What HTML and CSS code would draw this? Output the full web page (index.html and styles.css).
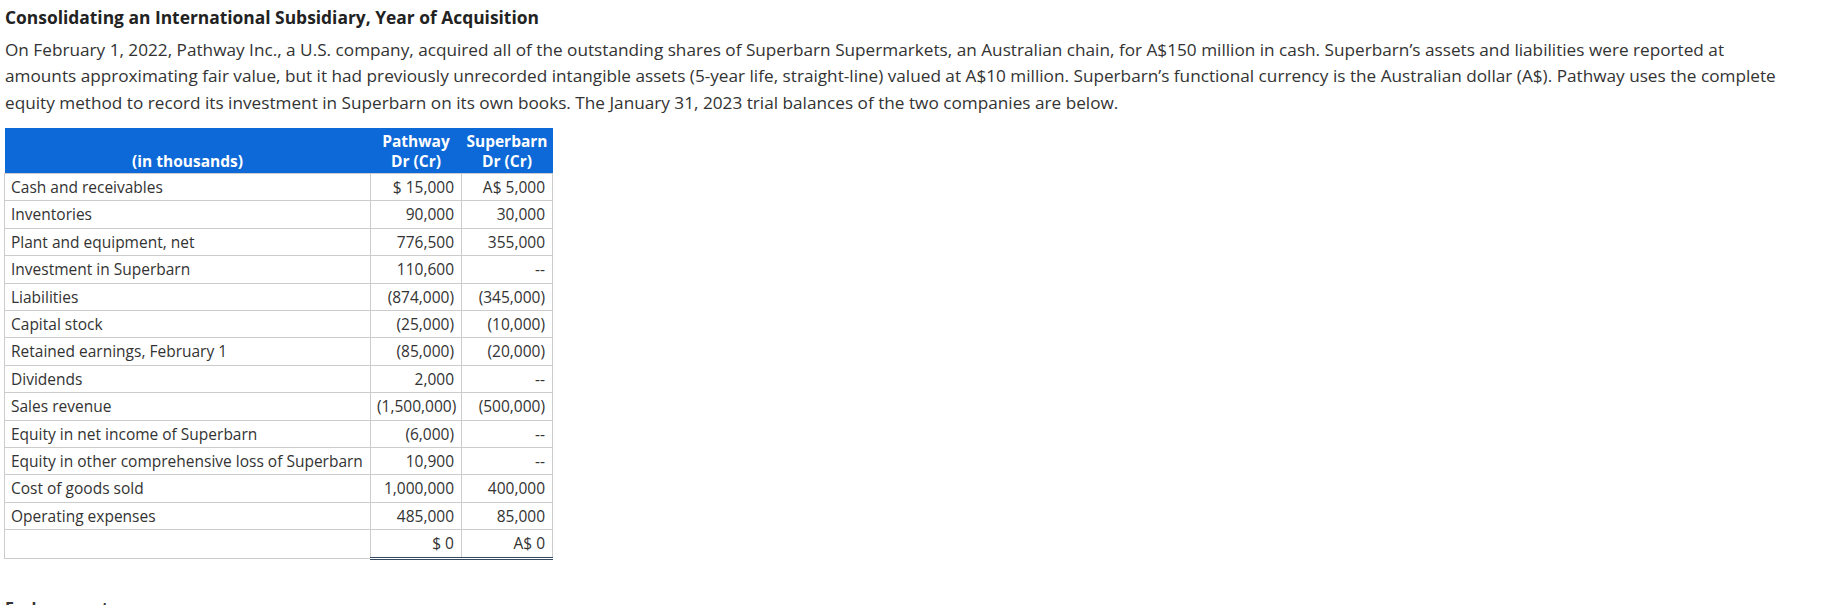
FILE: index.html
```html
<!DOCTYPE html>
<html lang="en">
<head>
<meta charset="utf-8">
<title>Consolidating an International Subsidiary</title>
<link rel="stylesheet" href="styles.css">
</head>
<body>
<div class="page">
  <h1 class="title">Consolidating an International Subsidiary, Year of Acquisition</h1>
  <p class="intro">On February 1, 2022, Pathway Inc., a U.S. company, acquired all of the outstanding shares of Superbarn Supermarkets, an Australian chain, for A$150 million in cash. Superbarn’s assets and liabilities were reported at amounts approximating fair value, but it had previously unrecorded intangible assets (5-year life, straight-line) valued at A$10 million. Superbarn’s functional currency is the Australian dollar (A$). Pathway uses the complete equity method to record its investment in Superbarn on its own books. The January 31, 2023 trial balances of the two companies are below.</p>
  <table class="tb">
    <colgroup>
      <col class="c-lbl">
      <col class="c-num">
      <col class="c-num">
    </colgroup>
    <thead>
      <tr>
        <th class="lbl">(in thousands)</th>
        <th class="num-h">Pathway<br>Dr (Cr)</th>
        <th class="num-h">Superbarn<br>Dr (Cr)</th>
      </tr>
    </thead>
    <tbody>
      <tr><td>Cash and receivables</td><td class="n">$ 15,000</td><td class="n">A$ 5,000</td></tr>
      <tr><td>Inventories</td><td class="n">90,000</td><td class="n">30,000</td></tr>
      <tr><td>Plant and equipment, net</td><td class="n">776,500</td><td class="n">355,000</td></tr>
      <tr><td>Investment in Superbarn</td><td class="n">110,600</td><td class="n">--</td></tr>
      <tr><td>Liabilities</td><td class="n">(874,000)</td><td class="n">(345,000)</td></tr>
      <tr><td>Capital stock</td><td class="n">(25,000)</td><td class="n">(10,000)</td></tr>
      <tr><td>Retained earnings, February 1</td><td class="n">(85,000)</td><td class="n">(20,000)</td></tr>
      <tr><td>Dividends</td><td class="n">2,000</td><td class="n">--</td></tr>
      <tr><td>Sales revenue</td><td class="n">(1,500,000)</td><td class="n">(500,000)</td></tr>
      <tr><td>Equity in net income of Superbarn</td><td class="n">(6,000)</td><td class="n">--</td></tr>
      <tr><td>Equity in other comprehensive loss of Superbarn</td><td class="n">10,900</td><td class="n">--</td></tr>
      <tr><td>Cost of goods sold</td><td class="n">1,000,000</td><td class="n">400,000</td></tr>
      <tr><td>Operating expenses</td><td class="n">485,000</td><td class="n">85,000</td></tr>
      <tr class="total"><td></td><td class="n">$ 0</td><td class="n">A$ 0</td></tr>
    </tbody>
  </table>
  <h2 class="next">Exchange rates</h2>
</div>
</body>
</html>
```

FILE: styles.css
```css
html, body {
  margin: 0;
  padding: 0;
  background: #ffffff;
}

body {
  font-family: "Open Sans", "Liberation Sans", sans-serif;
  color: #333333;
}

.page {
  padding: 4px 5px 0 5px;
  width: 1780px;
}

.title {
  margin: 0;
  font-size: 17.4px;
  font-weight: 700;
  line-height: 26px;
  color: #222222;
}

.intro {
  margin: 7px 0 0 0;
  font-size: 17.2px;
  line-height: 26.3px;
  color: #333333;
}

.tb {
  margin: 12px 0 0 -1px;
  border-collapse: collapse;
  table-layout: fixed;
  width: 548px;
  font-size: 15.5px;
  color: #333333;
}

.c-lbl {
  width: 366px;
}

.c-num {
  width: 91px;
}

.tb th {
  background: #0c69d7;
  color: #ffffff;
  font-weight: 700;
  line-height: 20px;
  padding: 3px 2px 2px 2px;
  vertical-align: bottom;
  text-align: center;
  white-space: nowrap;
}

.tb td {
  border: 1px solid #cccccc;
  padding: 3px 7px 3px 6px;
  line-height: 20.4px;
  white-space: nowrap;
}

.tb td.n {
  text-align: right;
}

.tb tr.total td.n {
  border-top: 1px solid #000000;
  border-bottom: 3px double #34495e;
}

.next {
  margin: 37px 0 0 0;
  font-size: 16px;
  line-height: 22px;
  font-weight: 700;
  color: #333333;
}
```
